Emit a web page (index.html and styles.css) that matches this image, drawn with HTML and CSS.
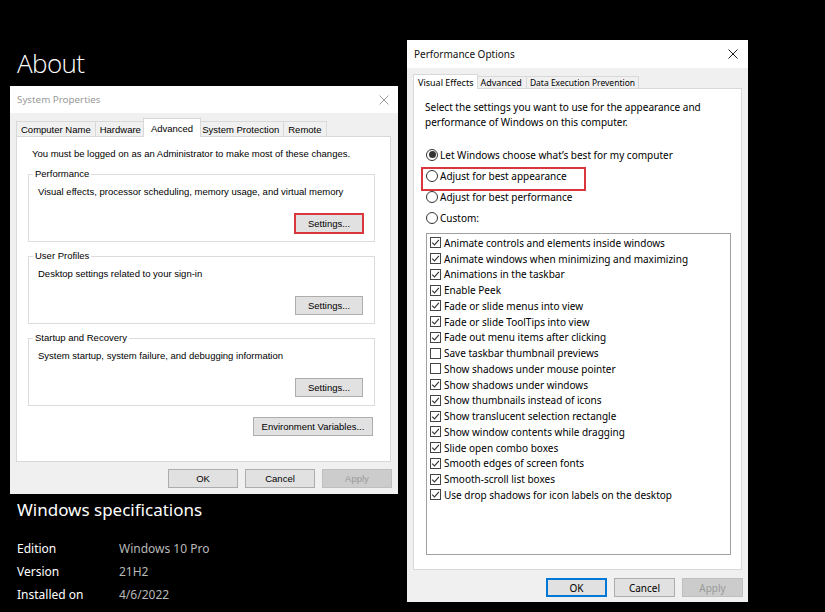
FILE: index.html
```html
<!DOCTYPE html>
<html lang="en">
<head>
<meta charset="utf-8">
<title>About</title>
<link rel="stylesheet" href="styles.css">
</head>
<body>
<main class="about">
  <h1 class="about-title">About</h1>
  <h2 class="spec-title">Windows specifications</h2>
  <dl class="specs">
    <div class="spec-row"><dt>Edition</dt><dd>Windows 10 Pro</dd></div>
    <div class="spec-row"><dt>Version</dt><dd>21H2</dd></div>
    <div class="spec-row"><dt>Installed on</dt><dd>4/6/2022</dd></div>
  </dl>
</main>

<section class="dlg sp">
  <header class="sp-titlebar">
    <span class="sp-title">System Properties</span>
    <svg class="close close-light" width="10" height="10" viewBox="0 0 10 10"><path d="M0.5 0.5L9.5 9.5M9.5 0.5L0.5 9.5"/></svg>
  </header>
  <nav class="tabs sp-tabs">
    <span class="tab">Computer Name</span>
    <span class="tab">Hardware</span>
    <span class="tab active">Advanced</span>
    <span class="tab">System Protection</span>
    <span class="tab">Remote</span>
  </nav>
  <div class="sp-panel">
    <p class="sp-note">You must be logged on as an Administrator to make most of these changes.</p>
    <fieldset class="grp">
      <legend>Performance</legend>
      <p>Visual effects, processor scheduling, memory usage, and virtual memory</p>
      <div class="grp-actions"><button class="btn settings hl">Settings...</button></div>
    </fieldset>
    <fieldset class="grp">
      <legend>User Profiles</legend>
      <p>Desktop settings related to your sign-in</p>
      <div class="grp-actions"><button class="btn settings">Settings...</button></div>
    </fieldset>
    <fieldset class="grp">
      <legend>Startup and Recovery</legend>
      <p>System startup, system failure, and debugging information</p>
      <div class="grp-actions"><button class="btn settings">Settings...</button></div>
    </fieldset>
    <div class="env-row"><button class="btn env">Environment Variables...</button></div>
  </div>
  <footer class="sp-footer">
    <button class="btn sp-btn">OK</button>
    <button class="btn sp-btn">Cancel</button>
    <button class="btn sp-btn disabled">Apply</button>
  </footer>
</section>

<section class="dlg po">
  <header class="po-titlebar">
    <span class="po-title">Performance Options</span>
    <svg class="close close-dark" width="10" height="10" viewBox="0 0 10 10"><path d="M0.5 0.5L9.5 9.5M9.5 0.5L0.5 9.5"/></svg>
  </header>
  <nav class="tabs po-tabs">
    <span class="tab active">Visual Effects</span>
    <span class="tab">Advanced</span>
    <span class="tab narrow">Data Execution Prevention</span>
  </nav>
  <div class="po-panel">
    <p class="po-intro">Select the settings you want to use for the appearance and performance of Windows on this computer.</p>
    <div class="radios">
      <div class="radio"><span class="dot on"></span><span>Let Windows choose what’s best for my computer</span></div>
      <div class="radio hl"><span class="dot"></span><span>Adjust for best appearance</span></div>
      <div class="radio"><span class="dot"></span><span>Adjust for best performance</span></div>
      <div class="radio"><span class="dot"></span><span>Custom:</span></div>
    </div>
    <ul class="listbox">
      <li class="item"><span class="cb on"></span>Animate controls and elements inside windows</li>
      <li class="item"><span class="cb on"></span>Animate windows when minimizing and maximizing</li>
      <li class="item"><span class="cb on"></span>Animations in the taskbar</li>
      <li class="item"><span class="cb on"></span>Enable Peek</li>
      <li class="item"><span class="cb on"></span>Fade or slide menus into view</li>
      <li class="item"><span class="cb on"></span>Fade or slide ToolTips into view</li>
      <li class="item"><span class="cb on"></span>Fade out menu items after clicking</li>
      <li class="item"><span class="cb"></span>Save taskbar thumbnail previews</li>
      <li class="item"><span class="cb"></span>Show shadows under mouse pointer</li>
      <li class="item"><span class="cb on"></span>Show shadows under windows</li>
      <li class="item"><span class="cb on"></span>Show thumbnails instead of icons</li>
      <li class="item"><span class="cb on"></span>Show translucent selection rectangle</li>
      <li class="item"><span class="cb on"></span>Show window contents while dragging</li>
      <li class="item"><span class="cb on"></span>Slide open combo boxes</li>
      <li class="item"><span class="cb on"></span>Smooth edges of screen fonts</li>
      <li class="item"><span class="cb on"></span>Smooth-scroll list boxes</li>
      <li class="item"><span class="cb on"></span>Use drop shadows for icon labels on the desktop</li>
    </ul>
  </div>
  <footer class="po-footer">
    <button class="btn po-btn default">OK</button>
    <button class="btn po-btn">Cancel</button>
    <button class="btn po-btn disabled">Apply</button>
  </footer>
</section>
</body>
</html>
```

FILE: styles.css
```css
* { box-sizing: border-box; }
html, body { margin: 0; padding: 0; }
body {
  width: 825px;
  height: 612px;
  background: #000;
  position: relative;
  overflow: hidden;
  font-family: "Noto Sans", sans-serif;
}

/* background About page */
.about { padding: 46px 0 0 17px; color: #fff; }
.about-title {
  margin: 0;
  font-family: "Open Sans", "Noto Sans", sans-serif;
  font-weight: 300;
  font-size: 26px;
  line-height: 34px;
  letter-spacing: -0.6px;
}
.spec-title {
  margin: 418px 0 0;
  font-weight: 400;
  font-size: 17px;
  line-height: 24px;
}
.specs { margin: 15px 0 0; font-size: 12px; }
.spec-row { display: flex; align-items: center; height: 23px; }
.spec-row dt { width: 102px; color: #fff; }
.spec-row dd { margin: 0; color: #b8b8b8; }

/* dialogs */
.dlg {
  position: absolute;
  background: #f0f0f0;
  display: flex;
  flex-direction: column;
}
.close { display: block; fill: none; stroke-width: 1; }
.close-light { stroke: #9a9a9a; }
.close-dark { stroke: #222; }

.btn {
  height: 19px;
  padding: 0;
  border: 1px solid #adadad;
  background: #e1e1e1;
  color: #000;
  font: inherit;
  display: flex;
  align-items: center;
  justify-content: center;
}
.btn.disabled { background: #cccccc; border-color: #bfbfbf; color: #9a9a9a; }

/* tabs */
.tabs { display: flex; align-items: flex-end; position: relative; z-index: 1; }
.tab {
  border: 1px solid #d9d9d9;
  border-bottom: 0;
  padding: 0 4px;
  display: flex;
  align-items: center;
  white-space: nowrap;
  background: #f0f0f0;
}
.tab + .tab { margin-left: -1px; }
.tab.active {
  background: #fff;
  margin-left: -3px;
  margin-right: -2px;
  margin-bottom: -1px;
  padding: 0 6px;
  position: relative;
  z-index: 1;
}
.tab:first-child.active { margin-left: -2px; }

/* System Properties */
.sp {
  left: 10px;
  top: 86px;
  width: 388px;
  height: 408px;
  font-family: "Liberation Sans", Arial, sans-serif;
  font-size: 9.5px;
  color: #000;
}
.sp-titlebar {
  height: 27px;
  flex: none;
  background: #fff;
  display: flex;
  align-items: center;
  justify-content: space-between;
  padding: 0 9px 0 7px;
}
.sp-title { font-family: "Noto Sans", sans-serif; font-size: 9.8px; color: #999; }
.sp-tabs { height: 18px; margin-top: 5px; padding-left: 6px; flex: none; }
.sp-tabs .tab { height: 15px; }
.sp-tabs .tab.active { height: 19px; padding: 0 7px; margin-right: -3px; }

.sp-panel {
  height: 326px;
  flex: none;
  margin: 0 7px 0 6px;
  background: #fff;
  border: 1px solid #d9d9d9;
  padding: 11px 15px 0 11px;
}
.sp-note { margin: 0 0 0 4px; line-height: 12px; }
.grp {
  margin: 8px 0 0;
  padding: 0 11px 8px 9px;
  border: 1px solid #dcdcdc;
  min-width: 0;
}
.grp legend { margin-left: -5px; padding: 0 2px; line-height: 12px; }
.grp p { margin: 6px 0 0; line-height: 12px; }
.grp-actions { display: flex; justify-content: flex-end; margin-top: 16px; }
.btn.settings { width: 68px; }
.btn.hl { border-color: #d9363e; box-shadow: 0 0 0 1px #d9363e; }
.env-row { display: flex; justify-content: flex-end; margin-top: 11px; padding-right: 2px; }
.btn.env { width: 120px; }
.sp-footer { display: flex; justify-content: flex-end; gap: 7px; padding: 7px 6px 0 0; }
.btn.sp-btn { width: 70px; }

/* Performance Options */
.po {
  left: 407px;
  top: 40px;
  width: 341px;
  height: 562px;
  font-family: "Noto Sans", sans-serif;
  font-size: 10px;
  color: #000;
}
.po-titlebar {
  height: 28px;
  flex: none;
  background: #fff;
  display: flex;
  align-items: center;
  justify-content: space-between;
  padding: 0 10px 0 7px;
}
.po-title { font-size: 10px; color: #111; }
.po-tabs { height: 14px; margin-top: 6px; padding-left: 8px; flex: none; font-size: 9px; }
.po-tabs .tab { height: 12px; padding: 0 4px; }
.po-tabs .tab.active { height: 15px; padding: 0 4px; }
.po-tabs .tab.narrow { font-size: 8.5px; padding: 0 3px; }

.po-panel {
  height: 482px;
  flex: none;
  margin: 0 6px;
  background: #fff;
  border: 1px solid #d9d9d9;
  padding: 11px 10px 0 11px;
}
.po-intro { margin: 0; line-height: 15px; }
.radios { margin-top: 14px; }
.radio {
  height: 21px;
  display: flex;
  align-items: center;
  gap: 2px;
  margin-left: 1px;
  position: relative;
}
.dot {
  width: 12px;
  height: 12px;
  border: 1px solid #333;
  border-radius: 50%;
  background: #fff;
  display: flex;
  align-items: center;
  justify-content: center;
  flex: none;
}
.dot.on::before {
  content: "";
  width: 7px;
  height: 7px;
  border-radius: 50%;
  background: #333;
}
.radio.hl::after {
  content: "";
  position: absolute;
  left: -5px;
  top: 2px;
  width: 161px;
  height: 20px;
  border: 2px solid #d9363e;
}
.listbox {
  list-style: none;
  margin: 5px 0 0 1px;
  width: 305px;
  height: 322px;
  border: 1px solid #a0a0a0;
  background: #fff;
  padding: 1px 0 0 3px;
}
.item { height: 15.75px; display: flex; align-items: center; gap: 3px; white-space: nowrap; }
.cb {
  width: 11px;
  height: 11px;
  border: 1px solid #444;
  background: #fff;
  flex: none;
}
.cb.on {
  background: #fff url("data:image/svg+xml,%3Csvg xmlns='http://www.w3.org/2000/svg' width='9' height='9' viewBox='0 0 9 9'%3E%3Cpath d='M1.2 4.6L3.5 6.9L7.9 1.8' fill='none' stroke='%23333' stroke-width='1.1'/%3E%3C/svg%3E") center / 9px 9px no-repeat;
}
.po-footer { display: flex; justify-content: flex-end; gap: 7px; padding: 8px 5px 0 0; }
.btn.po-btn { width: 61px; }
.btn.default { border-color: #0078d7; box-shadow: inset 0 0 0 1px #0078d7; }
```
